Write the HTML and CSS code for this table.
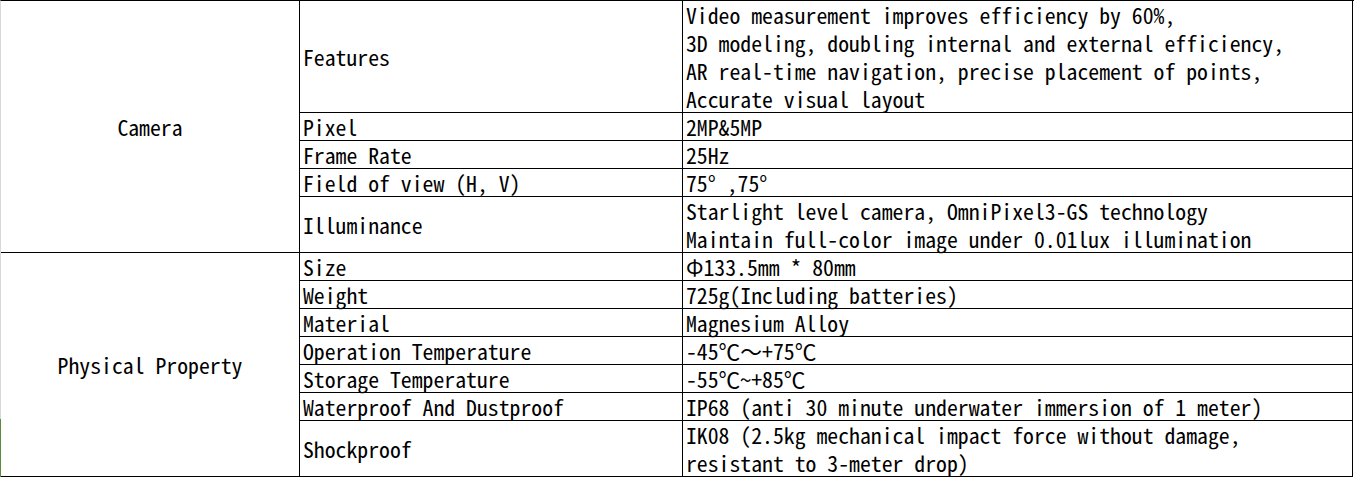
FILE: index.html
```html
<!DOCTYPE html>
<html lang="en">
<head>
<meta charset="utf-8">
<title>Specifications</title>
<link rel="stylesheet" href="styles.css">
</head>
<body>
<div class="spec">
  <div class="cell group g-camera">Camera</div>
  <div class="cell name">Features</div>
  <div class="cell value">Video measurement improves efficiency by 60%,<br>3D modeling, doubling internal and external efficiency,<br>AR real-time navigation, precise placement of points,<br>Accurate visual layout</div>
  <div class="cell name">Pixel</div>
  <div class="cell value">2MP&amp;5MP</div>
  <div class="cell name">Frame Rate</div>
  <div class="cell value">25Hz</div>
  <div class="cell name">Field of view (H, V)</div>
  <div class="cell value">75° ,75°</div>
  <div class="cell name">Illuminance</div>
  <div class="cell value">Starlight level camera, OmniPixel3-GS technology<br>Maintain full-color image under 0.01lux illumination</div>

  <div class="cell group g-physical">Physical Property</div>
  <div class="cell name">Size</div>
  <div class="cell value">Φ133.5mm * 80mm</div>
  <div class="cell name">Weight</div>
  <div class="cell value">725g(Including batteries)</div>
  <div class="cell name">Material</div>
  <div class="cell value">Magnesium Alloy</div>
  <div class="cell name">Operation Temperature</div>
  <div class="cell value">-45℃～+75℃</div>
  <div class="cell name">Storage Temperature</div>
  <div class="cell value">-55℃~+85℃</div>
  <div class="cell name">Waterproof And Dustproof</div>
  <div class="cell value">IP68 (anti 30 minute underwater immersion of 1 meter)</div>
  <div class="cell name">Shockproof</div>
  <div class="cell value">IK08 (2.5kg mechanical impact force without damage,<br>resistant to 3-meter drop)</div>
</div>
</body>
</html>
```
FILE: styles.css
```css
html, body {
  margin: 0;
  padding: 0;
  background: #ffffff;
}

.spec {
  position: relative;
  width: 1353px;
  display: grid;
  grid-template-columns: 299px 383px 670px;
  grid-template-rows: 112px 28px 28px 28px 56px repeat(6, 28px) 56px;
  border-top: 1px solid #000000;
  border-left: 1px solid #d6d9d6;
  font-family: "Noto Sans Mono CJK SC", "DejaVu Sans Mono", monospace;
  font-size: 21.75px;
  line-height: 28px;
  color: #000000;
}

.spec::after {
  content: "";
  position: absolute;
  left: -1px;
  top: 418px;
  width: 1px;
  height: 58px;
  background: #5b8c3c;
}

.cell {
  box-sizing: border-box;
  border-right: 1px solid #000000;
  border-bottom: 1px solid #000000;
  display: flex;
  align-items: center;
  white-space: nowrap;
}

.group {
  grid-column: 1;
  justify-content: center;
}

.g-camera {
  grid-row: 1 / span 5;
}

.g-physical {
  grid-row: 6 / span 7;
}

.name {
  grid-column: 2;
  padding-left: 3px;
}

.value {
  grid-column: 3;
  padding-left: 3px;
}
```
